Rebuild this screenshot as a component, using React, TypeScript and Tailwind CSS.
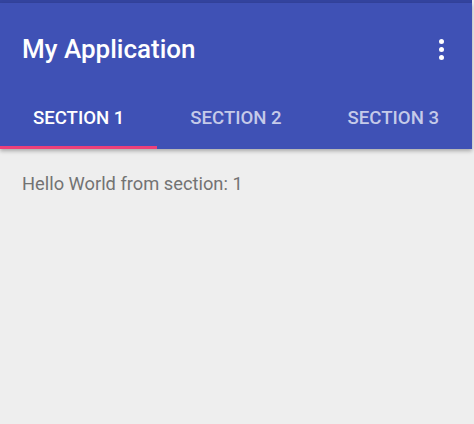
const tabs = ['SECTION 1', 'SECTION 2', 'SECTION 3'];

export default function App() {
  const active = 0;

  return (
    <div
      className="h-[424px] w-[474px] bg-[#eeeeee] flex flex-col overflow-hidden"
      style={{ fontFamily: 'Roboto, "Liberation Sans", sans-serif' }}
    >
      {/* status bar strip */}
      <div className="h-[3px] w-[472px] bg-[#34449f]" />

      {/* toolbar + tabs */}
      <header className="w-[472px] bg-[#3f51b5] shadow-[0_2px_4px_rgba(0,0,0,0.3)] relative z-10">
        <div className="h-[93px] flex items-center justify-between pl-[22px] pr-[28px]">
          <h1 className="text-[26px] font-medium text-white -mt-[1px]">My Application</h1>
          <button aria-label="More options" className="flex flex-col items-center gap-[3px]">
            <span className="block w-[5px] h-[5px] rounded-full bg-white" />
            <span className="block w-[5px] h-[5px] rounded-full bg-white" />
            <span className="block w-[5px] h-[5px] rounded-full bg-white" />
          </button>
        </div>
        <nav className="grid grid-cols-3 h-[53px]">
          {tabs.map((t, i) => (
            <div key={t} className="relative flex items-center justify-center">
              <span
                className={
                  i === active
                    ? 'text-[18.6px] font-medium text-white -mt-[7px]'
                    : 'text-[18.6px] font-medium text-[#c5cae9] -mt-[7px]'
                }
              >
                {t}
              </span>
              {i === active && (
                <div className="absolute left-0 right-0 bottom-0 h-[3px] bg-[#ec407a]" />
              )}
            </div>
          ))}
        </nav>
      </header>

      <main className="px-[22px] pt-[21px]">
        <p className="text-[18.3px] text-[#737373]">Hello World from section: 1</p>
      </main>
    </div>
  );
}
